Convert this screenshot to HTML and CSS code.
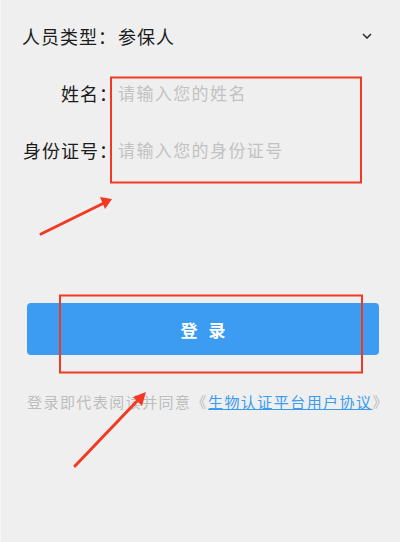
FILE: index.html
```html
<!DOCTYPE html>
<html lang="zh-CN">
<head>
<meta charset="utf-8">
<title>登录</title>
<link rel="stylesheet" href="styles.css">
</head>
<body>
<div class="page">
  <div class="form">
    <div class="row">
      <span class="label">人员类型：</span>
      <span class="value">参保人</span>
      <svg class="chevron" width="10" height="6" viewBox="0 0 10 6"><path d="M1 1 L5 5 L9 1" fill="none" stroke="#333" stroke-width="1.6"/></svg>
    </div>
    <div class="row">
      <span class="label label-fixed">姓名：</span>
      <span class="placeholder">请输入您的姓名</span>
    </div>
    <div class="row">
      <span class="label label-fixed">身份证号：</span>
      <span class="placeholder">请输入您的身份证号</span>
    </div>
  </div>
  <div class="btn"><span>登</span><span>录</span></div>
  <p class="agree">登录即代表阅读并同意《<a class="link">生物认证平台用户协议</a>》</p>

  <svg class="marks" width="400" height="542" viewBox="0 0 400 542">
    <rect x="111" y="77.5" width="250" height="105" fill="none" stroke="#f23a22" stroke-width="2"/>
    <rect x="60" y="295.5" width="302" height="77" fill="none" stroke="#f23a22" stroke-width="2"/>
    <line x1="41" y1="234" x2="104" y2="203" stroke="#f23a22" stroke-width="3" stroke-linecap="round"/>
    <polygon points="112,199 100,197 105,209" fill="#f23a22"/>
    <line x1="75" y1="466" x2="139" y2="399" stroke="#f23a22" stroke-width="3" stroke-linecap="round"/>
    <polygon points="146,392 133,397 142,406" fill="#f23a22"/>
  </svg>
</div>
</body>
</html>
```

FILE: styles.css
```css
html, body {
  margin: 0;
  padding: 0;
  background: #efefef;
}
body {
  font-family: "Noto Sans CJK SC", "Noto Sans", sans-serif;
}
.page {
  position: relative;
  width: 400px;
  height: 542px;
  overflow: hidden;
  box-sizing: border-box;
  border-left: 1px solid #f7f7f7;
}
.form {
  padding-top: 7px;
  padding-left: 21px;
  padding-right: 28px;
}
.row {
  display: flex;
  align-items: center;
  height: 57px;
}
.label {
  font-size: 18px;
  letter-spacing: 1px;
  color: #1c1c1c;
  white-space: nowrap;
}
.label-fixed {
  width: 96px;
  text-align: right;
}
.value {
  font-size: 18px;
  letter-spacing: 1px;
  color: #1c1c1c;
  margin-left: 1px;
}
.chevron {
  margin-left: auto;
  margin-top: 0;
}
.placeholder {
  font-size: 17px;
  letter-spacing: 1.4px;
  color: #c2c2c2;
}
.btn {
  margin: 125px 21px 0 26px;
  height: 52px;
  background: #3b9cf1;
  border-radius: 4px;
  display: flex;
  justify-content: center;
  align-items: center;
  gap: 11px;
  color: #ffffff;
  font-size: 17px;
  font-weight: bold;
}
.agree {
  margin: 37px 0 0 26px;
  width: 370px;
  font-size: 15px;
  line-height: 20px;
  letter-spacing: 1.45px;
  color: #bdbdbd;
  white-space: nowrap;
}
.link {
  color: #3a9bf0;
  text-decoration: underline;
}
.marks {
  position: absolute;
  left: -1px;
  top: 0;
}
```
